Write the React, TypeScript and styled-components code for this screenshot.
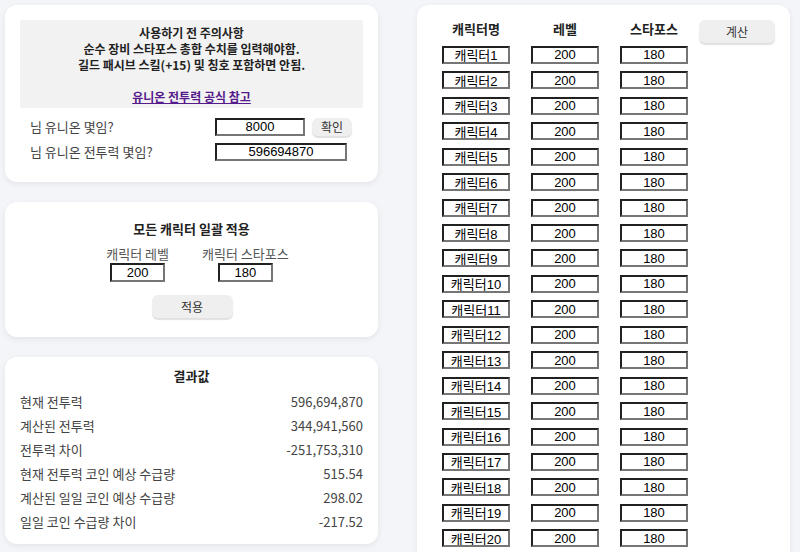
import styled, { createGlobalStyle } from "styled-components";

const GlobalStyle = createGlobalStyle`
  body {
    margin: 0;
    background-color: #f4f5f9;
    font-family: "Noto Sans CJK KR", "Noto Sans", sans-serif;
    color: #333;
  }
`;
const Page = styled.div`
  display: flex;
  align-items: flex-start;
  gap: 39px;
  padding: 5px;
  height: 552px;
  box-sizing: border-box;
  overflow: hidden;
`;
const LeftColumn = styled.div`
  display: flex;
  flex-direction: column;
  gap: 20px;
  width: 373px;
`;
const Card = styled.div`
  background-color: white;
  border-radius: 12px;
  box-shadow: 0 2px 6px rgba(0, 0, 0, 0.07);
  padding: 15px;
`;
const Notice = styled.div`
  background-color: #f2f2f2;
  border-radius: 3px;
  padding: 5px 0 3px;
  text-align: center;
  font-size: 12px;
  font-weight: 700;
  line-height: 16px;
  color: #222;
  p {
    margin: 0;
  }
  a {
    color: #551a8b;
    text-decoration: underline;
  }
`;
const FormGrid = styled.div`
  display: grid;
  grid-template-columns: 185px auto;
  row-gap: 6px;
  padding: 9px 0 6px 10px;
  align-items: center;
`;
const Label = styled.div`
  font-size: 13px;
  color: #444;
`;
const InputCell = styled.div`
  display: flex;
  align-items: center;
  gap: 7px;
`;
const Field = styled.input<{ $w: number; $h?: number }>`
  width: ${(p) => p.$w}px;
  height: ${(p) => p.$h ?? 18}px;
  box-sizing: border-box;
  border: 2px inset #767676;
  padding: 0 2px;
  text-align: center;
  font-family: "Liberation Sans", "Noto Sans CJK KR", sans-serif;
  font-size: 13px;
  color: #000;
  background: white;
`;
const Button = styled.button<{ $w: number; $h: number }>`
  width: ${(p) => p.$w}px;
  height: ${(p) => p.$h}px;
  border: none;
  border-radius: 6px;
  background-color: #efefef;
  box-shadow: 0 2px 1px rgba(0, 0, 0, 0.12);
  font-family: "Noto Sans CJK KR", sans-serif;
  font-size: 12px;
  color: #333;
  padding: 0;
  cursor: pointer;
`;
const CardTitle = styled.h3<{ $offset: number }>`
  margin: ${(p) => p.$offset}px 0 0;
  text-align: center;
  font-size: 13px;
  font-weight: 700;
  line-height: 20px;
  color: #222;
`;
const BulkCard = styled(Card)`
  padding-bottom: 19px;
`;
const BulkRow = styled.div`
  display: flex;
  justify-content: center;
  gap: 33px;
  margin-top: 6px;
  padding-left: 12px;
`;
const BulkGroup = styled.div`
  display: flex;
  flex-direction: column;
  align-items: center;
  label {
    font-size: 13px;
    color: #555;
    line-height: 18px;
  }
`;
const ApplyWrap = styled.div`
  display: flex;
  justify-content: center;
  margin-top: 13px;
  padding-left: 1px;
`;
const ResultCard = styled(Card)`
  padding-bottom: 10px;
`;
const ResultList = styled.div`
  display: flex;
  flex-direction: column;
  margin-top: 4px;
`;
const ResultRow = styled.div`
  display: flex;
  justify-content: space-between;
  font-size: 13px;
  line-height: 24px;
  color: #444;
`;
const RightCard = styled(Card)`
  width: 373px;
  box-sizing: border-box;
  padding: 15px 15px 20px 25px;
  display: flex;
  align-items: flex-start;
  gap: 11px;
  min-height: 560px;
  border-radius: 12px 12px 0 0;
`;
const CharTable = styled.div`
  display: grid;
  grid-template-columns: repeat(3, 68px);
  column-gap: 21px;
  row-gap: 7.45px;
`;
const HeaderCell = styled.div`
  text-align: center;
  font-size: 13px;
  font-weight: 700;
  line-height: 18px;
  color: #222;
  margin-bottom: 0.5px;
`;

const results = [
  ["현재 전투력", "596,694,870"],
  ["계산된 전투력", "344,941,560"],
  ["전투력 차이", "-251,753,310"],
  ["현재 전투력 코인 예상 수급량", "515.54"],
  ["계산된 일일 코인 예상 수급량", "298.02"],
  ["일일 코인 수급량 차이", "-217.52"],
];

const characters = Array.from({ length: 20 }, (_, i) => ({
  name: `캐릭터${i + 1}`,
  level: "200",
  star: "180",
}));

function App() {
  return (
    <>
      <GlobalStyle />
      <Page>
        <LeftColumn>
          <Card>
            <Notice>
              <p>사용하기 전 주의사항</p>
              <p>순수 장비 스타포스 총합 수치를 입력해야함.</p>
              <p>길드 패시브 스킬(+15) 및 칭호 포함하면 안됨.</p>
              <p>&nbsp;</p>
              <p>
                <a href="#">유니온 전투력 공식 참고</a>
              </p>
            </Notice>
            <FormGrid>
              <Label>님 유니온 몇임?</Label>
              <InputCell>
                <Field $w={90} defaultValue="8000" />
                <Button $w={40} $h={18}>확인</Button>
              </InputCell>
              <Label>님 유니온 전투력 몇임?</Label>
              <InputCell>
                <Field $w={132} defaultValue="596694870" />
              </InputCell>
            </FormGrid>
          </Card>
          <BulkCard>
            <CardTitle $offset={2}>모든 캐릭터 일괄 적용</CardTitle>
            <BulkRow>
              <BulkGroup>
                <label>캐릭터 레벨</label>
                <Field $w={55} $h={19} defaultValue="200" />
              </BulkGroup>
              <BulkGroup>
                <label>캐릭터 스타포스</label>
                <Field $w={55} $h={19} defaultValue="180" />
              </BulkGroup>
            </BulkRow>
            <ApplyWrap>
              <Button $w={81} $h={23}>적용</Button>
            </ApplyWrap>
          </BulkCard>
          <ResultCard>
            <CardTitle $offset={-6}>결과값</CardTitle>
            <ResultList>
              {results.map(([label, value]) => (
                <ResultRow key={label}>
                  <span>{label}</span>
                  <span>{value}</span>
                </ResultRow>
              ))}
            </ResultList>
          </ResultCard>
        </LeftColumn>
        <RightCard>
          <CharTable>
            <HeaderCell>캐릭터명</HeaderCell>
            <HeaderCell>레벨</HeaderCell>
            <HeaderCell>스타포스</HeaderCell>
            {characters.map((c) => [
              <Field key={c.name + "n"} $w={68} defaultValue={c.name} />,
              <Field key={c.name + "l"} $w={68} defaultValue={c.level} />,
              <Field key={c.name + "s"} $w={68} defaultValue={c.star} />,
            ])}
          </CharTable>
          <Button $w={76} $h={23}>계산</Button>
        </RightCard>
      </Page>
    </>
  );
}

export default App;
